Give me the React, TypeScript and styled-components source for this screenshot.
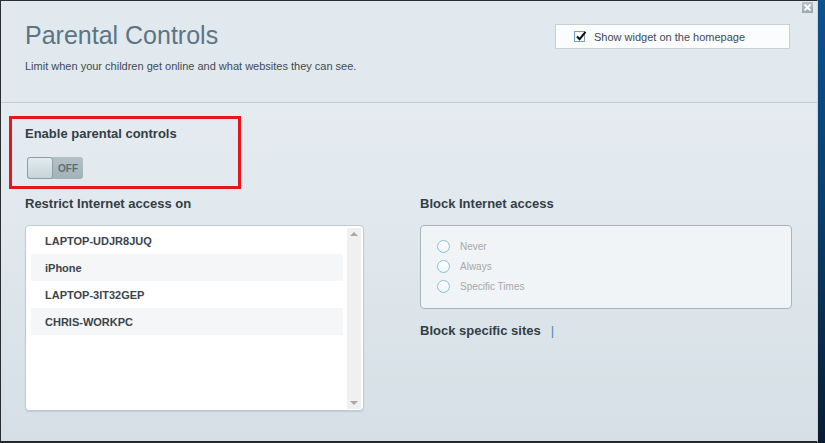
import styled, { createGlobalStyle } from 'styled-components';

const GlobalStyle = createGlobalStyle`
  html, body {
    margin: 0;
    padding: 0;
  }
  body {
    font-family: 'Liberation Sans', Arial, sans-serif;
  }
`;

const Frame = styled.div`
  width: 825px;
  height: 443px;
  display: flex;
  overflow: hidden;
`;

const Panel = styled.div`
  position: relative;
  width: 818px;
  height: 443px;
  box-sizing: border-box;
  display: flex;
  flex-direction: column;
  border-top: 1px solid #2b2e31;
  border-left: 1px solid #2b2e31;
  border-bottom: 2px solid #25282b;
  border-right: 1px solid #c9d4db;
  background: linear-gradient(to bottom, #e7edf1 0%, #e3eaef 40%, #d5dfe5 100%);
`;

const Strip = styled.div`
  width: 7px;
  height: 443px;
  background: linear-gradient(to bottom, #0e5290 0%, #0b3c68 50%, #0a1c30 100%);
`;

const Header = styled.header`
  display: flex;
  justify-content: space-between;
  align-items: flex-start;
  padding: 19px 27px 0 24px;
  height: 82px;
  background: #e1e9ef;
  border-bottom: 1px solid #c3cdd4;
`;

const TitleBlock = styled.div`
  display: flex;
  flex-direction: column;
`;

const Title = styled.h1`
  margin: 0;
  font-size: 25px;
  line-height: 30px;
  font-weight: normal;
  color: #5b7584;
`;

const Subtitle = styled.p`
  margin: 9px 0 0;
  font-size: 11px;
  line-height: 14px;
  color: #3e4a53;
`;

const WidgetBox = styled.label`
  margin-top: 4px;
  width: 235px;
  height: 25px;
  box-sizing: border-box;
  display: flex;
  align-items: center;
  gap: 9px;
  padding-left: 18px;
  background: #fbfcfd;
  border: 1px solid #c5d0d9;
  font-size: 11px;
  color: #3f4950;
`;

const CheckBox = styled.span`
  width: 11px;
  height: 11px;
  box-sizing: border-box;
  border: 1px solid #6ea3c8;
  background: #fff;
  position: relative;

  svg {
    position: absolute;
    left: 0;
    top: -2px;
  }
`;

const CloseButton = styled.button`
  position: absolute;
  top: 1px;
  right: 4px;
  width: 11px;
  height: 11px;
  padding: 0;
  border: none;
  background: linear-gradient(to bottom, #b8c1c7, #9ba6ad);
  display: flex;
  align-items: center;
  justify-content: center;
`;

const Body = styled.main`
  flex: 1;
  padding: 13px 0 0 24px;
`;

const Highlight = styled.section`
  margin-left: -16px;
  width: 232px;
  box-sizing: border-box;
  border: 3px solid #e8141c;
  padding: 7px 0 7px 13px;
`;

const Heading = styled.h2`
  margin: 0;
  font-size: 13px;
  line-height: 16px;
  font-weight: bold;
  color: #333d45;
  display: flex;
  align-items: center;
  gap: 10px;
`;

const Toggle = styled.div`
  margin: 15px 0 0 2px;
  width: 56px;
  height: 22px;
  display: flex;
  border-radius: 3px;
  overflow: hidden;
  background: linear-gradient(to bottom, #b3c1c7, #a2b2b9);
`;

const Knob = styled.span`
  width: 26px;
  height: 22px;
  box-sizing: border-box;
  border: 1px solid #8c9ea6;
  border-radius: 3px;
  background: linear-gradient(to bottom, #e3ebee, #c6d4da);
`;

const ToggleText = styled.span`
  flex: 1;
  display: flex;
  align-items: center;
  justify-content: center;
  font-size: 10px;
  font-weight: bold;
  color: #5e6c73;
`;

const Columns = styled.div`
  display: flex;
  gap: 56px;
  margin-top: 7px;
`;

const Column = styled.div<{ $width: number }>`
  width: ${(p) => p.$width}px;
  display: flex;
  flex-direction: column;
`;

const ListBox = styled.div`
  margin-top: 13px;
  height: 186px;
  box-sizing: border-box;
  border: 1px solid #bfcad1;
  border-radius: 4px;
  background: #fff;
  display: flex;
  box-shadow: 0 1px 1px rgba(160, 175, 185, 0.4);
`;

const Rows = styled.ul`
  flex: 1;
  list-style: none;
  margin: 0;
  padding: 1px 4px 0 5px;
`;

const Row = styled.li<{ $shaded: boolean }>`
  height: 27px;
  display: flex;
  align-items: center;
  padding-left: 14px;
  font-size: 11px;
  font-weight: bold;
  color: #3a444c;
  background: ${(p) => (p.$shaded ? '#f5f6f7' : 'transparent')};
`;

const Scrollbar = styled.div`
  width: 14px;
  margin: 2px 2px 1px 0;
  background: #f0f0f0;
  display: flex;
  flex-direction: column;
  justify-content: space-between;
  align-items: center;
  padding: 4px 0;
  box-sizing: border-box;
`;

const Arrow = styled.span<{ $down?: boolean }>`
  width: 0;
  height: 0;
  border-left: 4px solid transparent;
  border-right: 4px solid transparent;
  ${(p) =>
    p.$down
      ? 'border-top: 4px solid #a8a8a8;'
      : 'border-bottom: 4px solid #a8a8a8;'}
`;

const RadioBox = styled.div`
  margin-top: 13px;
  height: 84px;
  box-sizing: border-box;
  border: 1px solid #a9b5bd;
  border-radius: 4px;
  background: #f0f4f7;
  padding: 10px 0 0 16px;
`;

const RadioRow = styled.label`
  height: 20px;
  display: flex;
  align-items: center;
  gap: 10px;
  font-size: 10px;
  color: #a8a8a8;
`;

const RadioDot = styled.span`
  width: 13px;
  height: 13px;
  box-sizing: border-box;
  border: 1px solid #89bfdb;
  border-radius: 50%;
  background: linear-gradient(to bottom, #ffffff, #eef4f7);
`;

const SitesHeading = styled(Heading)`
  margin-top: 14px;
`;

const Caret = styled.span`
  font-weight: normal;
  color: #4f86b3;
`;

const devices = ['LAPTOP-UDJR8JUQ', 'iPhone', 'LAPTOP-3IT32GEP', 'CHRIS-WORKPC'];
const options = ['Never', 'Always', 'Specific Times'];

const App = () => {
  return (
    <Frame>
      <GlobalStyle />
      <Panel>
        <CloseButton aria-label="Close">
          <svg width="9" height="9" viewBox="0 0 9 9">
            <path d="M1.5 1.5 L7.5 7.5 M7.5 1.5 L1.5 7.5" stroke="#fff" strokeWidth="2" />
          </svg>
        </CloseButton>
        <Header>
          <TitleBlock>
            <Title>Parental Controls</Title>
            <Subtitle>Limit when your children get online and what websites they can see.</Subtitle>
          </TitleBlock>
          <WidgetBox>
            <CheckBox>
              <svg width="12" height="12" viewBox="0 0 12 12">
                <path d="M2 6.5 L4.6 9.2 L10.5 1.8" stroke="#111" strokeWidth="2" fill="none" />
              </svg>
            </CheckBox>
            Show widget on the homepage
          </WidgetBox>
        </Header>
        <Body>
          <Highlight>
            <Heading>Enable parental controls</Heading>
            <Toggle>
              <Knob />
              <ToggleText>OFF</ToggleText>
            </Toggle>
          </Highlight>
          <Columns>
            <Column $width={339}>
              <Heading>Restrict Internet access on</Heading>
              <ListBox>
                <Rows>
                  {devices.map((d, i) => (
                    <Row key={d} $shaded={i % 2 === 1}>
                      {d}
                    </Row>
                  ))}
                </Rows>
                <Scrollbar>
                  <Arrow />
                  <Arrow $down />
                </Scrollbar>
              </ListBox>
            </Column>
            <Column $width={372}>
              <Heading>Block Internet access</Heading>
              <RadioBox>
                {options.map((o) => (
                  <RadioRow key={o}>
                    <RadioDot />
                    {o}
                  </RadioRow>
                ))}
              </RadioBox>
              <SitesHeading>
                Block specific sites <Caret>|</Caret>
              </SitesHeading>
            </Column>
          </Columns>
        </Body>
      </Panel>
      <Strip />
    </Frame>
  );
};

export default App;
